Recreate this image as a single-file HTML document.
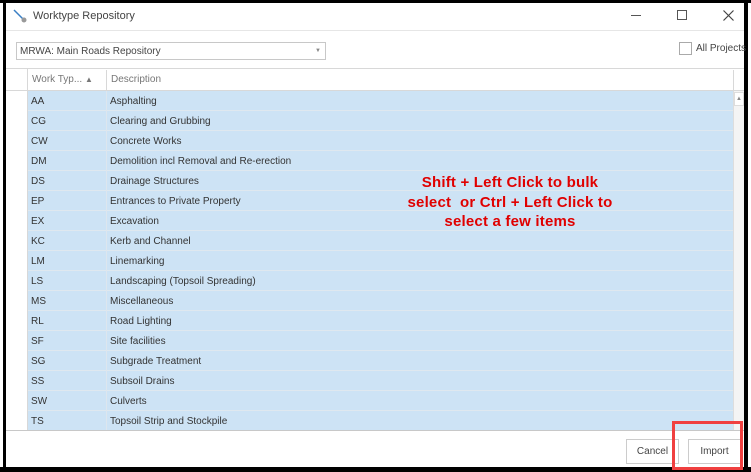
<!DOCTYPE html>
<html><head><style>
*{margin:0;padding:0;box-sizing:border-box}
body{width:751px;height:472px;background:#fff;font-family:"Liberation Sans",sans-serif;font-size:10px;color:#333;position:relative;overflow:hidden}
.a{position:absolute}
.row{position:absolute;left:28px;width:705px;height:20px;background:#cde3f5;border-bottom:1px solid #dfe8ef}
.row span{position:absolute;top:5px}
</style></head><body>
<div class="a" style="left:0;top:0;width:751px;height:3px;background:#000"></div>
<div class="a" style="left:3px;top:0;width:3px;height:472px;background:#000"></div>
<div class="a" style="left:744px;top:0;width:4px;height:472px;background:#000"></div>
<div class="a" style="left:0;top:467px;width:751px;height:5px;background:#000"></div>
<svg class="a" style="left:12px;top:8px" width="16" height="16"><line x1="2" y1="2" x2="11" y2="11" stroke="#3a7fc4" stroke-width="1.5"/><circle cx="12" cy="12" r="2.5" fill="#999"/></svg>
<div class="a" style="left:33px;top:10px;font-size:11px;color:#444">Worktype Repository</div>
<div class="a" style="left:631px;top:15px;width:10px;height:1px;background:#555"></div>
<div class="a" style="left:677px;top:10px;width:10px;height:10px;border:1px solid #555"></div>
<svg class="a" style="left:723px;top:10px" width="11" height="11"><path d="M0.5 0.5L10.5 10.5M10.5 0.5L0.5 10.5" stroke="#444" stroke-width="1.2"/></svg>
<div class="a" style="left:6px;top:30px;width:738px;height:1px;background:#e6e6e6"></div>
<div class="a" style="left:16px;top:42px;width:310px;height:18px;border:1px solid #c8c8c8"></div>
<div class="a" style="left:20px;top:46px;font-size:10px;color:#444">MRWA: Main Roads Repository</div>
<div class="a" style="left:315px;top:48px;font-size:6px;color:#888">▼</div>
<div class="a" style="left:679px;top:42px;width:13px;height:13px;border:1px solid #aaa"></div>
<div class="a" style="left:696px;top:43px;font-size:10px;color:#444;white-space:nowrap">All Projects</div>
<div class="a" style="left:6px;top:68px;width:738px;height:1px;background:#d8d8d8"></div>
<div class="a" style="left:27px;top:68px;width:1px;height:363px;background:#d8d8d8"></div>
<div class="a" style="left:106px;top:70px;width:1px;height:20px;background:#d8d8d8"></div>
<div class="a" style="left:733px;top:70px;width:1px;height:20px;background:#d8d8d8"></div>
<div class="a" style="left:32px;top:74px;color:#777">Work Typ... <span style="font-size:8px">▲</span></div>
<div class="a" style="left:111px;top:74px;color:#777">Description</div>
<div class="a" style="left:6px;top:90px;width:738px;height:1px;background:#d8d8d8"></div>
<div class="row" style="top:91px"><span style="left:3px">AA</span><span style="left:82px">Asphalting</span></div>
<div class="row" style="top:111px"><span style="left:3px">CG</span><span style="left:82px">Clearing and Grubbing</span></div>
<div class="row" style="top:131px"><span style="left:3px">CW</span><span style="left:82px">Concrete Works</span></div>
<div class="row" style="top:151px"><span style="left:3px">DM</span><span style="left:82px">Demolition incl Removal and Re-erection</span></div>
<div class="row" style="top:171px"><span style="left:3px">DS</span><span style="left:82px">Drainage Structures</span></div>
<div class="row" style="top:191px"><span style="left:3px">EP</span><span style="left:82px">Entrances to Private Property</span></div>
<div class="row" style="top:211px"><span style="left:3px">EX</span><span style="left:82px">Excavation</span></div>
<div class="row" style="top:231px"><span style="left:3px">KC</span><span style="left:82px">Kerb and Channel</span></div>
<div class="row" style="top:251px"><span style="left:3px">LM</span><span style="left:82px">Linemarking</span></div>
<div class="row" style="top:271px"><span style="left:3px">LS</span><span style="left:82px">Landscaping (Topsoil Spreading)</span></div>
<div class="row" style="top:291px"><span style="left:3px">MS</span><span style="left:82px">Miscellaneous</span></div>
<div class="row" style="top:311px"><span style="left:3px">RL</span><span style="left:82px">Road Lighting</span></div>
<div class="row" style="top:331px"><span style="left:3px">SF</span><span style="left:82px">Site facilities</span></div>
<div class="row" style="top:351px"><span style="left:3px">SG</span><span style="left:82px">Subgrade Treatment</span></div>
<div class="row" style="top:371px"><span style="left:3px">SS</span><span style="left:82px">Subsoil Drains</span></div>
<div class="row" style="top:391px"><span style="left:3px">SW</span><span style="left:82px">Culverts</span></div>
<div class="row" style="top:411px"><span style="left:3px">TS</span><span style="left:82px">Topsoil Strip and Stockpile</span></div>
<div class="a" style="left:106px;top:91px;width:1px;height:340px;background:#dde6ee"></div>
<div class="a" style="left:733px;top:91px;width:11px;height:340px;background:#f4f4f4;border-left:1px solid #ddd"></div>
<div class="a" style="left:734px;top:92px;width:10px;height:14px;border:1px solid #ddd;background:#fff;font-size:6px;color:#888;text-align:center;line-height:12px">▲</div>
<div class="a" style="left:6px;top:430px;width:738px;height:1px;background:#c8c8c8"></div>
<div class="a" style="left:380px;top:173px;width:260px;text-align:center;color:#e00000;font-weight:bold;font-size:15px;line-height:19.5px;white-space:nowrap;letter-spacing:0.2px">Shift + Left Click to bulk<br>select &nbsp;or Ctrl + Left Click to<br>select a few items</div>
<div class="a" style="left:626px;top:439px;width:53px;height:25px;border:1px solid #ccc;text-align:center;line-height:23px;color:#444">Cancel</div>
<div class="a" style="left:688px;top:439px;width:53px;height:25px;border:1px solid #ccc;text-align:center;line-height:23px;color:#444">Import</div>
<div class="a" style="left:672px;top:421px;width:71px;height:49px;border:3px solid #f04040"></div>
</body></html>
